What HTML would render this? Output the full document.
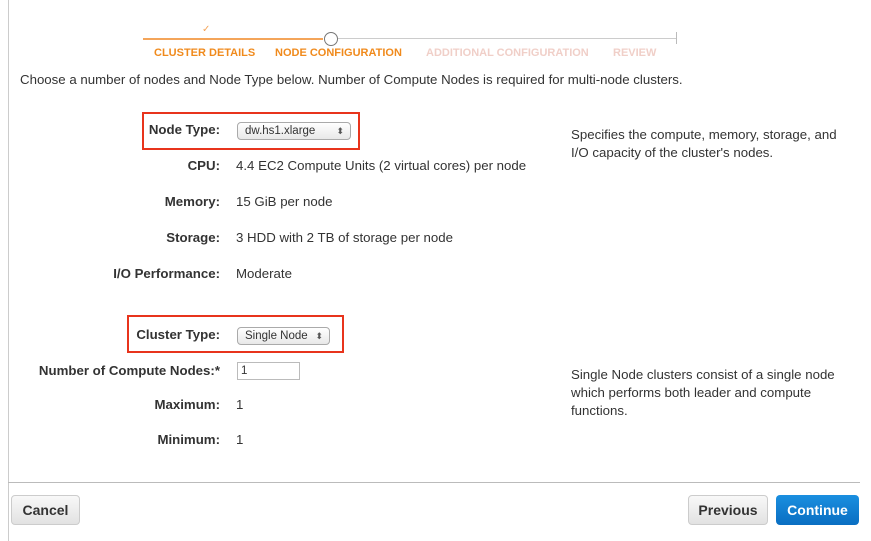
<!DOCTYPE html>
<html><head><style>
body{margin:0;width:871px;height:541px;background:#fff;position:relative;font-family:"Liberation Sans",Arial,sans-serif;font-size:13.25px;color:#333;overflow:hidden}
.a{position:absolute;white-space:nowrap}
.l{font-weight:bold;text-align:right;width:220px;left:0}
.step{position:absolute;top:47px;font-size:11px;font-weight:bold}
.sel{position:absolute;height:16px;border:1px solid #aaa;border-radius:4px;background:linear-gradient(#fff,#e8e8e8);font-size:11.5px;line-height:16px;padding-left:7px;box-sizing:content-box}
.sel:after{content:"⬍";position:absolute;right:6px;top:0;font-size:9px;color:#555}
.btn{position:absolute;top:495px;height:28px;border-radius:4px;font-weight:bold;font-size:14px;line-height:28px;text-align:center}
.g{border:1px solid #ccc;background:linear-gradient(#f8f8f8,#e2e2e2);color:#333}
.red{position:absolute;border:2px solid #e8341c}
</style></head><body>
<div class="a" style="left:8px;top:0;width:1px;height:541px;background:#ccc"></div>
<div class="a" style="left:143px;top:38px;width:180px;height:2px;background:#f4a55a"></div>
<div class="a" style="left:336px;top:38px;width:340px;height:1px;background:#ccc"></div>
<div class="a" style="left:676px;top:32px;width:1px;height:12px;background:#bbb"></div>
<div class="a" style="left:324px;top:32px;width:12px;height:12px;border:1.5px solid #777;border-radius:50%;background:#fff"></div>
<div class="a" style="left:202px;top:24px;color:#f4a55a;font-size:10px">✓</div>
<div class="step" style="left:154px;color:#f08a1c">CLUSTER DETAILS</div>
<div class="step" style="left:275px;color:#f08a1c">NODE CONFIGURATION</div>
<div class="step" style="left:426px;color:#f0cfc8">ADDITIONAL CONFIGURATION</div>
<div class="step" style="left:613px;color:#f0cfc8">REVIEW</div>
<div class="a" style="left:20px;top:72px">Choose a number of nodes and Node Type below. Number of Compute Nodes is required for multi-node clusters.</div>
<div class="red" style="left:142px;top:112px;width:214px;height:34px"></div>
<div class="a l" style="top:122px">Node Type:</div>
<div class="sel" style="left:237px;top:122px;width:105px">dw.hs1.xlarge</div>
<div class="a l" style="top:158px">CPU:</div><div class="a" style="left:236px;top:158px">4.4 EC2 Compute Units (2 virtual cores) per node</div>
<div class="a l" style="top:194px">Memory:</div><div class="a" style="left:236px;top:194px">15 GiB per node</div>
<div class="a l" style="top:230px">Storage:</div><div class="a" style="left:236px;top:230px">3 HDD with 2 TB of storage per node</div>
<div class="a l" style="top:266px">I/O Performance:</div><div class="a" style="left:236px;top:266px">Moderate</div>
<div class="a" style="left:571px;top:126px;line-height:18px">Specifies the compute, memory, storage, and<br>I/O capacity of the cluster's nodes.</div>
<div class="red" style="left:127px;top:315px;width:213px;height:34px"></div>
<div class="a l" style="top:327px">Cluster Type:</div>
<div class="sel" style="left:237px;top:327px;width:84px">Single Node</div>
<div class="a l" style="top:363px">Number of Compute Nodes:*</div>
<div class="a" style="left:237px;top:362px;width:58px;height:16px;border:1px solid #bbb;font-size:11.5px;line-height:16px;padding-left:3px">1</div>
<div class="a l" style="top:397px">Maximum:</div><div class="a" style="left:236px;top:397px">1</div>
<div class="a l" style="top:432px">Minimum:</div><div class="a" style="left:236px;top:432px">1</div>
<div class="a" style="left:571px;top:366px;line-height:18px">Single Node clusters consist of a single node<br>which performs both leader and compute<br>functions.</div>
<div class="a" style="left:8px;top:482px;width:852px;height:1px;background:#bbb"></div>
<div class="btn g" style="left:11px;width:67px">Cancel</div>
<div class="btn g" style="left:688px;width:78px">Previous</div>
<div class="btn" style="left:776px;width:83px;height:30px;line-height:30px;background:linear-gradient(#1a8fe0,#0a6ec2);color:#fff">Continue</div>
</body></html>
